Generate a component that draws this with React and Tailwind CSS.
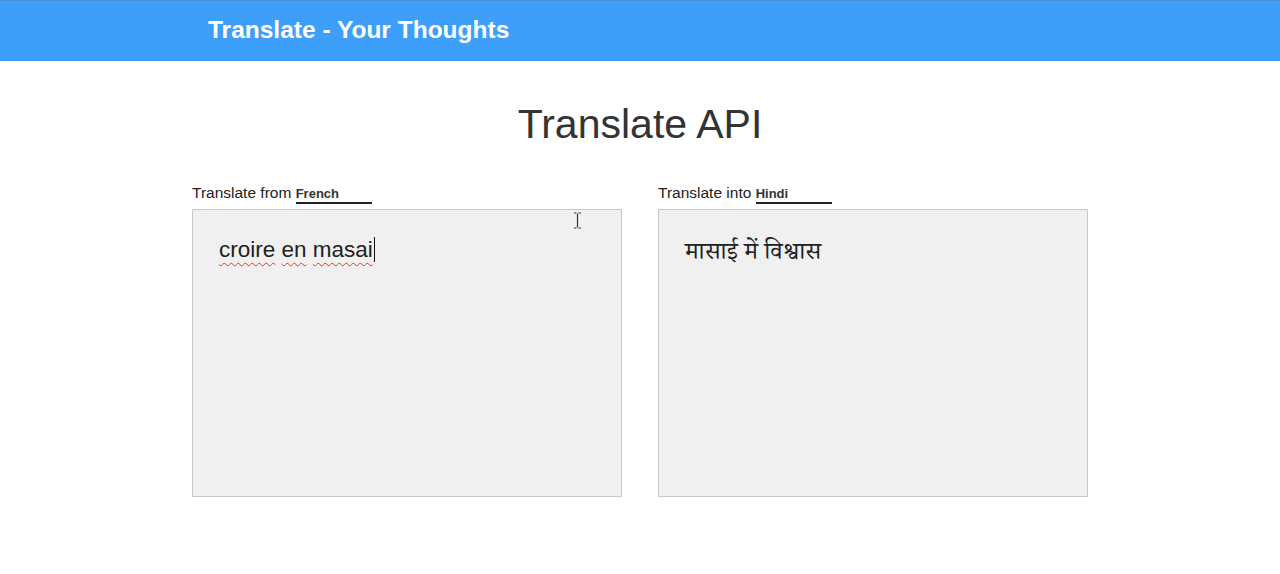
export default function App() {
  const font = { fontFamily: '"Liberation Sans", Arial, sans-serif' };
  const wavy = "underline decoration-wavy decoration-[#e0392b] decoration-1 underline-offset-[5px]";
  return (
    <div className="w-[1280px] h-[574px] bg-white relative overflow-hidden" style={font}>
      <header className="h-[61px] bg-[#3d9ff9] border-t border-[#4a90d9]">
        <div className="w-[896px] mx-auto px-4 h-full flex items-center">
          <h1 className="text-white font-bold text-[24.5px] leading-none -mt-[2px]">Translate - Your Thoughts</h1>
        </div>
      </header>
      <main className="w-[896px] mx-auto">
        <h2 className="text-center text-[41px] text-[#333333] leading-none mt-[43px]">Translate API</h2>
        <div className="grid grid-cols-2 gap-[36px] mt-[40px]">
          <div>
            <div className="flex items-baseline h-[20px] text-[15.5px] text-[#222] leading-none">
              <span>Translate from&nbsp;</span>
              <span className="w-[76px] border-b-2 border-[#222] text-[13px] font-bold text-[#333] pb-[2px]">French</span>
            </div>
            <div className="mt-[4px] h-[288px] bg-[#f0f0f0] border border-[#c8c8c8] px-[26px] pt-[29px] text-[22.5px] text-[#222] leading-none">
              <span className={wavy}>croire</span>{' '}
              <span className={wavy}>en</span>{' '}
              <span className={wavy + " border-r border-[#111] pr-[1px]"}>masai</span>
            </div>
          </div>
          <div>
            <div className="flex items-baseline h-[20px] text-[15.5px] text-[#222] leading-none">
              <span>Translate into&nbsp;</span>
              <span className="w-[76px] border-b-2 border-[#222] text-[13px] font-bold text-[#333] pb-[2px]">Hindi</span>
            </div>
            <div className="mt-[4px] h-[288px] bg-[#f0f0f0] border border-[#c8c8c8] px-[26px] pt-[33px] text-[24.5px] text-[#222] leading-none" style={{ fontFamily: '"Noto Serif Devanagari", "Lohit Devanagari", "Noto Sans", serif' }}>
              मासाई में विश्वास
            </div>
          </div>
        </div>
      </main>
      <svg className="absolute left-[573px] top-[212px]" width="9" height="17" viewBox="0 0 9 17">
        <path d="M1 1h2.5M5.5 1H8M4.5 1.5v14M1 16h2.5M5.5 16H8" stroke="#333" strokeWidth="1.2" fill="none" />
      </svg>
    </div>
  );
}
